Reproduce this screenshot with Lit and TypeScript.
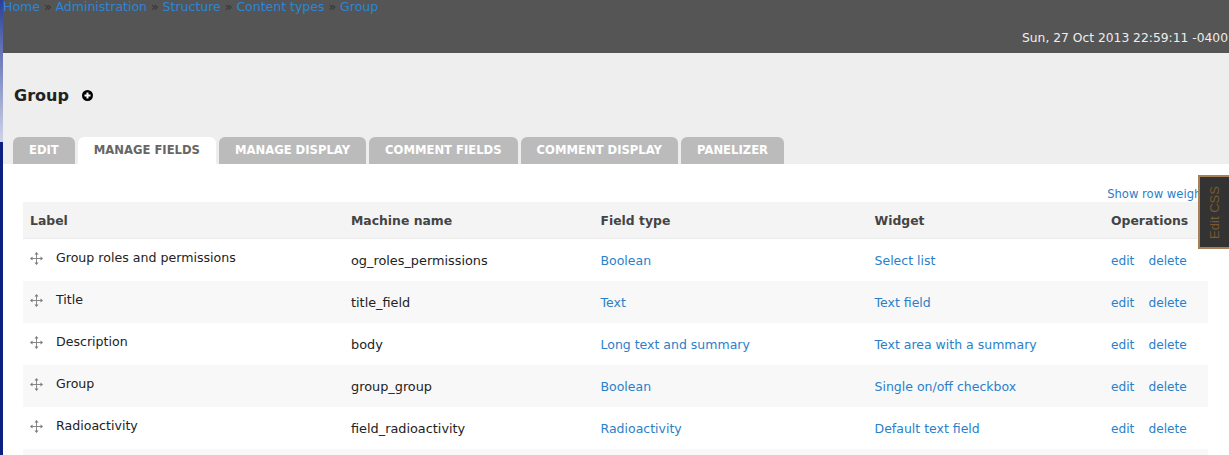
import { LitElement, html, css, svg } from "lit";
import { customElement } from "lit/decorators.js";

const rows = [
  ["Group roles and permissions", "og_roles_permissions", "Boolean", "Select list"],
  ["Title", "title_field", "Text", "Text field"],
  ["Description", "body", "Long text and summary", "Text area with a summary"],
  ["Group", "group_group", "Boolean", "Single on/off checkbox"],
  ["Radioactivity", "field_radioactivity", "Radioactivity", "Default text field"],
];
const crumbs = ["Home", "Administration", "Structure", "Content types", "Group"];
const tabs = ["Edit", "Manage fields", "Manage display", "Comment fields", "Comment display", "Panelizer"];

const drag = svg`<svg class="drag" width="13" height="13" viewBox="0 0 13 13"><path d="M6.5 0 8.5 2.5H4.5ZM6.5 13 4.5 10.5H8.5ZM0 6.5 2.5 4.5V8.5ZM13 6.5 10.5 8.5V4.5Z" fill="#777"/><path d="M6.5 2V11M2 6.5H11" stroke="#888" stroke-width="1"/></svg>`;

@customElement("app-root")
export class AppRoot extends LitElement {
  static styles = css`
    :host { display: flex; width: 1229px; height: 455px; overflow: hidden; background: #fff;
      font-family: "DejaVu Sans", sans-serif; font-size: 12.6px; color: #222; position: relative; }
    a { color: #2a7fc9; text-decoration: none; }
    .strip { width: 3px; flex: none; height: 455px;
      background: linear-gradient(#2a3f9a 0, #d0d4e8 142px, #0b2080 142px, #0b2080 100%); }
    .main { flex: 1; min-width: 0; display: flex; flex-direction: column; }
    .head { flex: none; height: 53px; background: #555; display: flex; flex-direction: column; box-sizing: border-box; }
    .crumbs { height: 30px; margin-top: -1px; margin-bottom: -1px; font-size: 12.5px; line-height: 16px; color: #333; white-space: pre; }
    .crumbs span { color: #333; }
    .crumbs a { color: #2d85d6; }
    .date { font-size: 12.3px; color: #eee; text-align: right; line-height: 16px; margin-top: 2px; padding-right: 1px; white-space: nowrap; }
    .band { flex: none; height: 111px; background: #eee; box-sizing: border-box; display: flex; flex-direction: column; padding-left: 10px; }
    .title { display: flex; align-items: center; height: 20px; margin-top: 32px; margin-left: 1px; font-size: 16px; font-weight: 700; color: #222; }
    .plus { margin-left: 13px; }
    .tabs { display: flex; gap: 3px; margin-top: 32px; height: 27px; }
    .tab { background: #bbb; color: #fff; font-size: 11.6px; font-weight: 700; text-transform: uppercase;
      padding: 0 16px; line-height: 27px; border-radius: 6px 6px 0 0; }
    .tab.on { background: #fff; color: #666; }
    .content { flex: 1; padding: 0 20px; position: relative; }
    .weights { height: 38px; text-align: right; font-size: 11.6px; line-height: 16px; box-sizing: border-box; padding-top: 22px; margin-right: -3px; white-space: nowrap; overflow: hidden; }
    .table { display: flex; flex-direction: column; width: 1185px; }
    .row { display: grid; grid-template-columns: 320px 249.5px 274px 237.5px 1fr; height: 42px; align-items: center; }
    .row.hd { height: 37px; background: #f4f4f4; border-bottom: 1px solid #ececec; box-sizing: border-box; font-weight: 700; font-size: 12.4px; color: #444; }
    .row.even { background: #f8f8f8; }
    .row > div { padding-left: 8px; white-space: nowrap; }
    .row.hd > div:first-child, .row.hd > div:last-child { padding-left: 7px; }
    .row > div.lab { display: flex; align-items: center; gap: 13px; padding-left: 7px; margin-top: -5px; }
    .lab .drag { margin-top: 1px; }
    .row > div.mach { font-size: 12.85px; }
    .row a { font-size: 12.5px; }
    .ops { display: flex; gap: 14px; padding-left: 7px !important; margin-top: 1px; }
    .ops a { font-size: 12.2px !important; }
    .css { position: absolute; left: 1198px; top: 175px; width: 31px; height: 74px; box-sizing: border-box;
      background: #333; border: 2px solid #a88058; border-right: 0; display: flex; align-items: center; justify-content: center; }
    .css span { transform: rotate(-90deg); white-space: nowrap; color: #7a5a2e; font-family: "Liberation Sans", sans-serif; font-size: 13px; }
  `;
  render() {
    return html`
      <div class="strip"></div>
      <div class="main">
        <div class="head">
          <div class="crumbs">${crumbs.map((c, i) => html`${i ? html`<span> » </span>` : ""}<a href="#">${c}</a>`)}</div>
          <div class="date">Sun, 27 Oct 2013 22:59:11 -0400</div>
        </div>
        <div class="band">
          <div class="title">Group
            <svg class="plus" width="11" height="11" viewBox="0 0 11 11"><circle cx="5.5" cy="5.5" r="5.5" fill="#000"/><path d="M5.5 2.5v6M2.5 5.5h6" stroke="#fff" stroke-width="2"/></svg>
          </div>
          <div class="tabs">${tabs.map((t, i) => html`<div class="tab ${i === 1 ? "on" : ""}">${t}</div>`)}</div>
        </div>
        <div class="content">
          <div class="weights"><a href="#">Show row weights</a></div>
          <div class="table">
            <div class="row hd"><div>Label</div><div>Machine name</div><div>Field type</div><div>Widget</div><div>Operations</div></div>
            ${rows.map((r, i) => html`<div class="row ${i % 2 ? "even" : ""}">
              <div class="lab">${drag}<span>${r[0]}</span></div>
              <div class="mach">${r[1]}</div>
              <div><a href="#">${r[2]}</a></div>
              <div><a href="#">${r[3]}</a></div>
              <div class="ops"><a href="#">edit</a><a href="#">delete</a></div>
            </div>`)}
            <div class="row even"></div>
          </div>
        </div>
      </div>
      <div class="css"><span>Edit CSS</span></div>
    `;
  }
}
